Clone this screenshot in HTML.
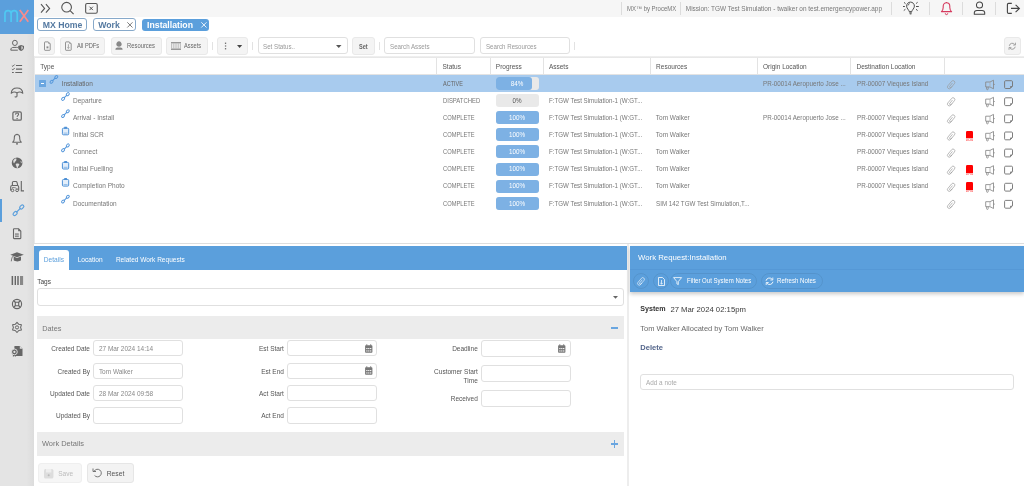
<!DOCTYPE html>
<html><head><meta charset="utf-8"><style>
html,body{margin:0;padding:0;width:1024px;height:486px;overflow:hidden;background:#fff;font-family:"Liberation Sans",sans-serif;}
.r{position:absolute;box-sizing:border-box;}
.t{position:absolute;white-space:nowrap;line-height:12px;height:12px;}
body{will-change:transform}
svg{overflow:visible}
</style></head><body>

<div class="r" style="left:0.00px;top:0.00px;width:34.00px;height:486.00px;background:linear-gradient(to right,#e4e4e4 0,#e4e4e4 78%,#dcdcdc 100%);z-index:2"></div>
<div class="r" style="left:0.00px;top:0.00px;width:34.00px;height:34.00px;background:#5b9fdc;z-index:3"></div>
<svg class="r" style="left:0;top:0;z-index:4" width="34" height="34" viewBox="0 0 34 34"><path d="M4.95 22.1 V13.4 A3.1 3.1 0 0 1 11.1 13.4 V22.1 M11.1 13.4 A3.1 3.1 0 0 1 17.25 13.4 V22.1" stroke="#4fc8f2" stroke-width="1.7" fill="none"/><path d="M19.8 9.9 L28.3 21.8 M28.3 9.9 L19.8 21.8" stroke="#f88b8b" stroke-width="1.7" fill="none"/></svg>
<div class="r" style="left:0.00px;top:199.00px;width:2.30px;height:23.00px;background:#5b9fdc;z-index:4"></div>
<svg class="r" style="left:0;top:0;z-index:4" width="34" height="486" viewBox="0 0 34 486"><ellipse cx="14.9" cy="42.9" rx="2.4" ry="2.6" stroke="#666" stroke-width="1" fill="none"/><path d="M10.8 50.2 c0-2.2 0.9-2.8 3.2-2.8 h2.4 c0.8 0 1.4 0.1 1.8 0.3 M10.8 50.2 h7" stroke="#666" stroke-width="1" fill="none"/><path d="M18.2 45.9 L21.1 44.9 L24 45.9 V47.8 c0 1.6-1.3 2.6-2.9 3.1 c-1.6-0.5-2.9-1.5-2.9-3.1z" fill="#666"/><path d="M21.3 46.1 l1.6 0.55 v1.2 c0 0.9-0.6 1.6-1.6 2z" fill="#cfcfcf"/><path d="M11.9 65.6 l0.9 0.8 l1.9-1.9 M11.9 69.1 l0.9 0.8 l1.9-1.9" stroke="#666" stroke-width="1" fill="none"/><path d="M12 72.5 h1.8 M16 65.5 h6.1 M16 69.1 h6.1 M15.3 72.5 h6.8" stroke="#666" stroke-width="1.2" fill="none"/><path d="M11.2 93.3 C11.4 89.8 14 88 17 88 C20 88 22.6 89.8 22.8 93.3 Q19.9 90.9 17 92.9 Q14.1 90.9 11.2 93.3Z" stroke="#666" stroke-width="1.05" fill="none" stroke-linejoin="round"/><path d="M17 92.9 V96 c0 1.3-1.8 1.4-2 0.3" stroke="#666" stroke-width="1.1" fill="none"/><rect x="12.9" y="111.9" width="8.4" height="8.3" rx="1.3" stroke="#666" stroke-width="1.2" fill="none"/><path d="M15.5 114.6 c0.1-1.3 0.8-1.6 1.6-1.6 c0.9 0 1.5 0.6 1.5 1.3 c0 1-1.4 1.2-1.5 2.6" stroke="#666" stroke-width="1.05" fill="none"/><rect x="16.5" y="118" width="1.2" height="1.1" fill="#666"/><path d="M12.7 142.2 c1-0.8 1.6-1.6 1.6-3.7 V137.5 c0-1.7 1.1-3 2.7-3 s2.7 1.3 2.7 3 v1 c0 2.1 0.6 2.9 1.6 3.7z" stroke="#666" stroke-width="1.05" fill="none" stroke-linejoin="round"/><path d="M16 143.8 h2" stroke="#666" stroke-width="1.2"/><path d="M17 133.8 v0.9" stroke="#666" stroke-width="1"/><circle cx="17.1" cy="162.9" r="5.35" fill="#666"/><path d="M13.2 160.8 c0.5-1.2 1.5-2.2 2.8-2.6 c0.5 0.6 0.6 1.4 0.2 2.2 c-0.4 0.9-1.3 1-1.5 1.9 c-0.2 0.6-0.3 1-0.8 1 c-0.5-0.4-0.6-1.7-0.7-2.5z" fill="#dedede"/><path d="M15.8 163.9 c0.8-0.4 2-0.5 2.9-0.2 c0.6 0.3 0.8 0.8 0.5 1.4 c-0.4 0.8-1 1.2-1.2 2.2 c-0.1 0.5-0.4 0.9-0.9 0.7 c-0.6-0.6-0.5-1.5-0.8-2.2 c-0.2-0.5-0.7-0.9-0.5-1.9z" fill="#dedede"/><path d="M20.8 160.8 c0.6 0.6 1 1.5 0.9 2.4 c-0.5 0-0.9-0.5-1-1.1 c-0.1-0.5-0.1-0.9 0.1-1.3z" fill="#dedede"/><path d="M12.4 185.4 V182.6 c0-0.8 0.4-1.1 1.2-1.1 h2.3 c0.7 0 1 0.4 1.2 1.1 l0.6 2.9" stroke="#666" stroke-width="1.1" fill="none"/><path d="M10.7 190.5 V187 c0-1 0.5-1.5 1.5-1.5 h5 c1 0 1.5 0.5 1.5 1.5 V190.5" stroke="#666" stroke-width="1.1" fill="none"/><circle cx="12.5" cy="190.3" r="1.35" stroke="#666" stroke-width="1" fill="#e4e4e4"/><circle cx="17.1" cy="190.3" r="1.35" stroke="#666" stroke-width="1" fill="#e4e4e4"/><path d="M21.3 181 V190.9 H24" stroke="#666" stroke-width="1.1" fill="none"/><path d="M12 187.8 c1.5-0.6 3-0.3 4.5 0.6" stroke="#666" stroke-width="0.8" fill="none"/><g transform="translate(18.45 210.25) rotate(-45)"><rect x="-7" y="-1.5" width="4.6" height="3" rx="1.5" stroke="#5b9fdc" stroke-width="1.15" fill="none"/><rect x="2.4" y="-1.5" width="4.6" height="3" rx="1.5" stroke="#5b9fdc" stroke-width="1.15" fill="none"/><path d="M-3 0 h6" stroke="#5b9fdc" stroke-width="1.3"/></g><path d="M14.1 228.7 h4.3 l2.4 2.4 v6.9 c0 0.4-0.2 0.6-0.6 0.6 h-6.1 c-0.4 0-0.6-0.2-0.6-0.6 v-8.7 c0-0.4 0.2-0.6 0.6-0.6z" stroke="#666" stroke-width="1.1" fill="none" stroke-linejoin="round"/><path d="M18.2 228.7 l2.6 2.6 h-2.6z" fill="#666"/><path d="M15 233.9 h3.8 M15 235 h3.8 M15 236.6 h3.8" stroke="#666" stroke-width="0.8"/><path d="M10.3 254.8 L17 252.2 L23.8 254.8 L17 257.3z" fill="#666"/><path d="M13.7 256.5 V260.3 c1.5 1.5 5.8 1.5 7.3 0 V256.5 L17 258z" fill="#666"/><path d="M16 254.6 C13 255.6 11.6 257 11.3 261.3" stroke="#666" stroke-width="0.9" fill="none"/><rect x="11.6" y="276" width="1.5" height="9" fill="#666"/><rect x="14.6" y="276" width="1.4" height="9" fill="#666"/><rect x="17" y="276" width="2" height="9" fill="#888"/><rect x="20" y="276" width="3.1" height="9" fill="#888"/><circle cx="17" cy="304" r="4.6" stroke="#666" stroke-width="1.15" fill="none"/><rect x="15.3" y="302.3" width="3.4" height="3.4" rx="0.6" stroke="#666" stroke-width="1.1" fill="none"/><path d="M13.6 300.6 l1.9 1.9 M20.4 300.6 l-1.9 1.9 M13.6 307.4 l1.9-1.9 M20.4 307.4 l-1.9-1.9" stroke="#666" stroke-width="1.3"/><path d="M17.00 322.30 L18.80 324.28 L21.42 324.85 L20.60 327.40 L21.42 329.95 L18.80 330.52 L17.00 332.50 L15.20 330.52 L12.58 329.95 L13.40 327.40 L12.58 324.85 L15.20 324.28z" stroke="#666" stroke-width="1.05" fill="none" stroke-linejoin="round"/><circle cx="17" cy="327.4" r="1.6" stroke="#666" stroke-width="1" fill="none"/><path d="M15 346 h4.8 l2.7 2.7 V355.4 c0 0.4-0.2 0.6-0.6 0.6 h-6.9 c-0.4 0-0.6-0.2-0.6-0.6 V346.6 c0-0.4 0.2-0.6 0.6-0.6z" fill="#666"/><path d="M19.8 346 l2.7 2.7 h-2.7z" fill="#dedede"/><path d="M12.9 353.5 v3.2 l1.5-0.8 l1.5 0.8 v-3.2" fill="#666"/><circle cx="14.4" cy="351.9" r="2.9" fill="#666" stroke="#e4e4e4" stroke-width="0.9"/><circle cx="14.4" cy="351.9" r="1.1" fill="#e4e4e4"/></svg>
<div class="r" style="left:34.00px;top:0.00px;width:990.00px;height:17.00px;background:#f6f6f6"></div>
<div class="r" style="left:621.00px;top:2.00px;width:1.00px;height:13.00px;background:#dcdcdc"></div>
<div class="r" style="left:680.40px;top:2.00px;width:1.00px;height:13.00px;background:#dcdcdc"></div>
<div class="r" style="left:891.20px;top:2.00px;width:1.00px;height:13.00px;background:#dcdcdc"></div>
<div class="r" style="left:929.20px;top:2.00px;width:1.00px;height:13.00px;background:#dcdcdc"></div>
<div class="r" style="left:962.10px;top:2.00px;width:1.00px;height:13.00px;background:#dcdcdc"></div>
<div class="r" style="left:995.40px;top:2.00px;width:1.00px;height:13.00px;background:#dcdcdc"></div>
<div class="t" style="left:626.70px;top:3.00px;font-size:6.7px;color:#777;font-weight:normal;transform:scaleX(0.8955223880597015);transform-origin:left center;">MX&trade; by ProceMX</div>
<div class="t" style="left:685.80px;top:3.00px;font-size:6.45px;color:#777;font-weight:normal;">Mission: TGW Test Simulation - twalker on test.emergencypower.app</div>
<svg class="r" style="left:0;top:0" width="1024" height="17" viewBox="0 0 1024 17"><path d="M41 4.2 L44.6 8.4 L41 12.6 M45.9 4.2 L49.6 8.4 L45.9 12.6" stroke="#555" stroke-width="1.1" fill="none"/><circle cx="66.6" cy="7.2" r="4.85" stroke="#555" stroke-width="1.1" fill="none"/><path d="M70.1 10.6 L73.6 14.1" stroke="#555" stroke-width="1.2"/><rect x="85.65" y="3.55" width="11.6" height="9.7" rx="1.4" stroke="#555" stroke-width="1.1" fill="none"/><path d="M89.5 6.7 L92.9 10.1 M92.9 6.7 L89.5 10.1" stroke="#444" stroke-width="0.9"/><path d="M909.2 11.6 c-0.2-1.6-2.6-3.2-2.6-5.5 c0-2.3 1.8-4 3.9-4 s3.9 1.7 3.9 4 c0 2.3-2.4 3.9-2.6 5.5z" stroke="#444" stroke-width="0.95" fill="none" stroke-linejoin="round"/><path d="M909.3 12.9 h2.5 M909.8 13.9 h1.6" stroke="#444" stroke-width="1"/><path d="M908 5.5 c0.2-1.1 0.9-1.7 1.8-1.9" stroke="#444" stroke-width="0.8" fill="none"/><path d="M903 6.5 h1.9 M916 6.5 h2.8 M904 2.4 l1.5 1.2 M917.6 2.3 l-1.5 1.2 M903.8 10.5 l1.6-1.2 M917.6 10.5 l-1.6-1.2" stroke="#444" stroke-width="0.95"/><path d="M941.4 11.6 c1-0.8 1.8-1.6 1.8-4.1 V6.3 c0-2 1.3-3.5 3.3-3.5 s3.3 1.5 3.3 3.5 v1.2 c0 2.5 0.8 3.3 1.8 4.1z" stroke="#d63a5e" stroke-width="1.1" fill="none" stroke-linejoin="round"/><path d="M945.4 13.2 v0.6 c0 0.6 0.4 0.8 1.1 0.8 s1.1-0.2 1.1-0.8 v-0.6" stroke="#d63a5e" stroke-width="1" fill="none"/><path d="M946.5 2 v0.9" stroke="#d63a5e" stroke-width="1"/><circle cx="979.5" cy="5" r="3.05" stroke="#444" stroke-width="1.05" fill="none"/><path d="M974.3 14.2 v-1.4 c0-1.6 1-2.4 2.6-2.4 h5.2 c1.6 0 2.6 0.8 2.6 2.4 v1.4z" stroke="#444" stroke-width="1.05" fill="none" stroke-linejoin="round"/><path d="M1011.8 3.4 H1008.6 c-0.8 0-1.2 0.4-1.2 1.2 V12.2 c0 0.8 0.4 1.2 1.2 1.2 H1011.8" stroke="#444" stroke-width="1.1" fill="none"/><path d="M1011 8.4 H1019.4 M1015.6 4.8 L1019.4 8.4 L1015.6 12.2" stroke="#444" stroke-width="1.1" fill="none"/></svg>
<div class="r" style="left:37.10px;top:18.20px;width:49.70px;height:13.30px;border:1.2px solid #87a9ca;border-radius:3px"></div>
<div class="t" style="left:42.70px;top:19.00px;font-size:8.7px;color:#5479a0;font-weight:bold;">MX Home</div>
<div class="r" style="left:93.20px;top:18.40px;width:42.50px;height:13.10px;border:1.2px solid #87a9ca;border-radius:3px"></div>
<div class="t" style="left:98.20px;top:19.00px;font-size:8.7px;color:#5479a0;font-weight:bold;">Work</div>
<svg class="r" style="left:126.90px;top:22.00px;" width="6" height="6" viewBox="0 0 6 6"><path d="M0.3 0.3 L5.5 5.5 M5.5 0.3 L0.3 5.5" stroke="#666" stroke-width="0.85"/></svg>
<div class="r" style="left:142.00px;top:18.80px;width:66.70px;height:12.30px;background:#5b9fdc;border-radius:3px"></div>
<div class="t" style="left:147.10px;top:19.00px;font-size:8.7px;color:#fff;font-weight:bold;">Installation</div>
<svg class="r" style="left:200.50px;top:22.00px;" width="6" height="6" viewBox="0 0 6 6"><path d="M0.3 0.3 L5.5 5.5 M5.5 0.3 L0.3 5.5" stroke="#fff" stroke-width="0.85"/></svg>
<div class="r" style="left:38.30px;top:37.00px;width:17.20px;height:18.00px;background:#f4f4f4;border:1px solid #e9e9e9;border-radius:3px"></div>
<svg class="r" style="left:43.50px;top:40.50px;" width="7" height="10" viewBox="0 0 7 10"><path d="M1 0.9 h3.3 l1.9 1.9 v6 c0 0.3-0.2 0.5-0.5 0.5 h-4.7 c-0.3 0-0.5-0.2-0.5-0.5 v-7.4 c0-0.3 0.2-0.5 0.5-0.5z" stroke="#888" stroke-width="0.9" fill="none"/><path d="M4.3 0.9 l1.9 1.9 h-1.9z" fill="#888"/><rect x="2.5" y="5.4" width="1.9" height="1.9" fill="#888"/></svg>
<div class="r" style="left:60.20px;top:37.00px;width:45.30px;height:18.00px;background:#f4f4f4;border:1px solid #e9e9e9;border-radius:3px"></div>
<svg class="r" style="left:64.80px;top:41.00px;" width="7" height="10" viewBox="0 0 7 10"><path d="M1 0.9 h3.3 l1.9 1.9 v6 c0 0.3-0.2 0.5-0.5 0.5 h-4.7 c-0.3 0-0.5-0.2-0.5-0.5 v-7.4 c0-0.3 0.2-0.5 0.5-0.5z" stroke="#888" stroke-width="0.9" fill="none"/><path d="M4.3 0.9 l1.9 1.9 h-1.9z" fill="#888"/><path d="M3.4 3.2 v4.2 M2.4 6.4 l1 1 l1-1" stroke="#888" stroke-width="0.7" fill="none"/></svg>
<div class="t" style="left:76.80px;top:40.00px;font-size:6.7px;color:#666;font-weight:normal;transform:scaleX(0.8507462686567164);transform-origin:left center;">All PDFs</div>
<div class="r" style="left:110.50px;top:37.00px;width:51.00px;height:18.00px;background:#f4f4f4;border:1px solid #e9e9e9;border-radius:3px"></div>
<svg class="r" style="left:114.50px;top:41.00px;" width="8" height="9.5" viewBox="0 0 8 9.5"><path d="M1.3 3.3 c0-1.5 1.2-2.8 2.7-3 c1.5 0.2 2.7 1.5 2.7 3 c0 1.3-1.2 2.5-2.7 2.5 s-2.7-1.2-2.7-2.5z" fill="#888"/><path d="M0.4 8.8 c0-1.6 0.9-2.3 2.2-2.3 h2.8 c1.3 0 2.2 0.7 2.2 2.3z" fill="#888"/><path d="M2.6 5.9 h2.8 v0.7 h-2.8z" fill="#bbb"/></svg>
<div class="t" style="left:126.90px;top:40.00px;font-size:6.7px;color:#666;font-weight:normal;transform:scaleX(0.8731343283582089);transform-origin:left center;">Resources</div>
<div class="r" style="left:166.00px;top:37.00px;width:42.00px;height:18.00px;background:#f4f4f4;border:1px solid #e9e9e9;border-radius:3px"></div>
<svg class="r" style="left:171.00px;top:41.80px;" width="10.2" height="8.2" viewBox="0 0 10.2 8.2"><rect x="0" y="0" width="10" height="1.4" fill="#999"/><rect x="0" y="6.5" width="10" height="1.5" fill="#999"/><path d="M0.5 1.4 v5.1 M2.3 1.4 v5.1 M4.1 1.4 v5.1 M5.9 1.4 v5.1 M7.7 1.4 v5.1 M9.5 1.4 v5.1" stroke="#aaa" stroke-width="0.7"/></svg>
<div class="t" style="left:183.90px;top:40.00px;font-size:6.7px;color:#666;font-weight:normal;transform:scaleX(0.8507462686567164);transform-origin:left center;">Assets</div>
<div class="r" style="left:211.70px;top:42.20px;width:1.00px;height:7.60px;background:#e2e2e2"></div>
<div class="r" style="left:217.00px;top:37.10px;width:30.80px;height:17.60px;background:#f4f4f4;border:1px solid #e9e9e9;border-radius:3px"></div>
<svg class="r" style="left:224.30px;top:40.90px;" width="3" height="10" viewBox="0 0 3 10"><rect x="0.9" y="1.6" width="1.3" height="1.3" fill="#666"/><rect x="0.9" y="4.35" width="1.3" height="1.3" fill="#777"/><rect x="0.9" y="7.1" width="1.3" height="1.3" fill="#666"/></svg>
<svg class="r" style="left:236.80px;top:44.90px;" width="6" height="4" viewBox="0 0 6 4"><path d="M0 0 H5.2 L2.6 2.9z" fill="#444"/></svg>
<div class="r" style="left:251.90px;top:42.20px;width:1.00px;height:7.60px;background:#e2e2e2"></div>
<div class="r" style="left:257.50px;top:37.30px;width:90.20px;height:17.20px;background:#fff;border:1px solid #e0e0e0;border-radius:3px"></div>
<div class="t" style="left:263.30px;top:41.00px;font-size:6.7px;color:#999;font-weight:normal;transform:scaleX(0.9253731343283582);transform-origin:left center;">Set Status..</div>
<svg class="r" style="left:336.00px;top:44.50px;" width="6" height="4" viewBox="0 0 6 4"><path d="M0 0 H5.5 L2.75 3z" fill="#555"/></svg>
<div class="r" style="left:352.30px;top:37.00px;width:22.40px;height:18.00px;background:#f4f4f4;border:1px solid #e9e9e9;border-radius:3px"></div>
<div class="t" style="left:359.40px;top:41.00px;font-size:6.7px;color:#666;font-weight:bold;transform:scaleX(0.835820895522388);transform-origin:left center;">Set</div>
<div class="r" style="left:379.20px;top:42.20px;width:1.00px;height:7.60px;background:#e2e2e2"></div>
<div class="r" style="left:384.30px;top:37.30px;width:90.70px;height:17.20px;background:#fff;border:1px solid #e0e0e0;border-radius:3px"></div>
<div class="t" style="left:390.20px;top:41.00px;font-size:6.7px;color:#999;font-weight:normal;transform:scaleX(0.9253731343283582);transform-origin:left center;">Search Assets</div>
<div class="r" style="left:479.60px;top:37.30px;width:90.20px;height:17.20px;background:#fff;border:1px solid #e0e0e0;border-radius:3px"></div>
<div class="t" style="left:485.50px;top:41.00px;font-size:6.7px;color:#999;font-weight:normal;transform:scaleX(0.9194029850746268);transform-origin:left center;">Search Resources</div>
<div class="r" style="left:573.80px;top:42.20px;width:1.00px;height:7.60px;background:#e2e2e2"></div>
<div class="r" style="left:1003.90px;top:37.20px;width:16.80px;height:17.40px;background:#f4f4f4;border:1px solid #e9e9e9;border-radius:3px"></div>
<svg class="r" style="left:1007.60px;top:41.90px;" width="8.5" height="8.5" viewBox="0 0 8.5 8.5"><g transform="scale(0.85)"><path d="M1.5 4.5 a3.6 3.6 0 0 1 6.5-1.5 M8.5 5.5 a3.6 3.6 0 0 1-6.5 1.5" stroke="#999" stroke-width="1.1" fill="none"/><path d="M8.8 0.8 v2.8 h-2.8 M1.2 9.2 v-2.8 h2.8" stroke="#999" stroke-width="1" fill="none"/></g></svg>
<div class="r" style="left:34.00px;top:56.00px;width:990.00px;height:2.00px;background:linear-gradient(#f2f2f2,#e4e4e4)"></div>
<div class="r" style="left:34.00px;top:56.00px;width:1.00px;height:188.00px;background:#e9e9e9"></div>
<div class="r" style="left:35.00px;top:58.00px;width:989.00px;height:16.50px;background:#fff;border-bottom:1px solid #e3e3e3"></div>
<div class="r" style="left:436.10px;top:57.50px;width:1.00px;height:17.00px;background:#e3e3e3"></div>
<div class="r" style="left:489.80px;top:57.50px;width:1.00px;height:17.00px;background:#e3e3e3"></div>
<div class="r" style="left:542.90px;top:57.50px;width:1.00px;height:17.00px;background:#e3e3e3"></div>
<div class="r" style="left:649.80px;top:57.50px;width:1.00px;height:17.00px;background:#e3e3e3"></div>
<div class="r" style="left:757.20px;top:57.50px;width:1.00px;height:17.00px;background:#e3e3e3"></div>
<div class="r" style="left:849.80px;top:57.50px;width:1.00px;height:17.00px;background:#e3e3e3"></div>
<div class="r" style="left:943.90px;top:57.50px;width:1.00px;height:17.00px;background:#e3e3e3"></div>
<div class="t" style="left:40.20px;top:61.00px;font-size:6.5px;color:#555;font-weight:normal;">Type</div>
<div class="t" style="left:442.50px;top:61.00px;font-size:6.5px;color:#555;font-weight:normal;">Status</div>
<div class="t" style="left:495.80px;top:61.00px;font-size:6.5px;color:#555;font-weight:normal;">Progress</div>
<div class="t" style="left:548.90px;top:61.00px;font-size:6.5px;color:#555;font-weight:normal;">Assets</div>
<div class="t" style="left:656.10px;top:61.00px;font-size:6.5px;color:#555;font-weight:normal;">Resources</div>
<div class="t" style="left:763.00px;top:61.00px;font-size:6.5px;color:#555;font-weight:normal;">Origin Location</div>
<div class="t" style="left:856.50px;top:61.00px;font-size:6.5px;color:#555;font-weight:normal;">Destination Location</div>
<div class="r" style="left:35.00px;top:74.50px;width:989.00px;height:17.20px;background:#a8cbee"></div>
<div class="r" style="left:39.40px;top:80.10px;width:6.50px;height:6.60px;background:#6aa6e0;border-radius:0.5px"></div>
<div class="r" style="left:40.90px;top:83.00px;width:3.50px;height:0.90px;background:#fff"></div>
<div class="t" style="left:61.70px;top:78.00px;font-size:6.5px;color:#666;font-weight:normal;">Installation</div>
<div class="t" style="left:442.50px;top:78.00px;font-size:6.5px;color:#666;font-weight:normal;transform:scaleX(0.85);transform-origin:left center;">ACTIVE</div>
<div class="r" style="left:495.80px;top:77.00px;width:42.80px;height:13.00px;background:#e9e9e9;border-radius:3px;overflow:hidden"></div>
<div class="r" style="left:495.80px;top:77.00px;width:35.95px;height:13.00px;background:#7db1e4;border-radius:3px"></div>
<div class="t" style="left:417.20px;width:200px;text-align:center;top:78.00px;font-size:6.7px;color:#fff;font-weight:normal;transform:scaleX(0.9402985074626865);transform-origin:center center;">84%</div>
<div class="t" style="left:762.80px;top:78.00px;font-size:6.7px;color:#777;font-weight:normal;transform:scaleX(0.9388059701492537);transform-origin:left center;">PR-00014 Aeropuerto Jose ...</div>
<div class="t" style="left:856.60px;top:78.00px;font-size:6.7px;color:#777;font-weight:normal;transform:scaleX(0.9402985074626865);transform-origin:left center;">PR-00007 Vieques Island</div>
<div class="t" style="left:73.00px;top:95.00px;font-size:6.5px;color:#777;font-weight:normal;">Departure</div>
<div class="t" style="left:442.50px;top:95.00px;font-size:6.5px;color:#777;font-weight:normal;transform:scaleX(0.909);transform-origin:left center;">DISPATCHED</div>
<div class="r" style="left:495.80px;top:94.10px;width:42.80px;height:13.00px;background:#e9e9e9;border-radius:3px;overflow:hidden"></div>
<div class="t" style="left:417.20px;width:200px;text-align:center;top:95.00px;font-size:6.7px;color:#555;font-weight:normal;transform:scaleX(0.9402985074626865);transform-origin:center center;">0%</div>
<div class="t" style="left:549.40px;top:95.00px;font-size:6.7px;color:#777;font-weight:normal;transform:scaleX(0.9253731343283582);transform-origin:left center;">F:TGW Test Simulation-1 (W:GT...</div>
<div class="t" style="left:73.00px;top:112.00px;font-size:6.5px;color:#777;font-weight:normal;">Arrival - Install</div>
<div class="t" style="left:442.50px;top:112.00px;font-size:6.5px;color:#777;font-weight:normal;transform:scaleX(0.887);transform-origin:left center;">COMPLETE</div>
<div class="r" style="left:495.80px;top:111.20px;width:42.80px;height:13.00px;background:#e9e9e9;border-radius:3px;overflow:hidden"></div>
<div class="r" style="left:495.80px;top:111.20px;width:42.80px;height:13.00px;background:#7db1e4;border-radius:3px"></div>
<div class="t" style="left:417.20px;width:200px;text-align:center;top:112.00px;font-size:6.7px;color:#fff;font-weight:normal;transform:scaleX(0.9402985074626865);transform-origin:center center;">100%</div>
<div class="t" style="left:549.40px;top:112.00px;font-size:6.7px;color:#777;font-weight:normal;transform:scaleX(0.9253731343283582);transform-origin:left center;">F:TGW Test Simulation-1 (W:GT...</div>
<div class="t" style="left:655.80px;top:112.00px;font-size:6.47px;color:#777;font-weight:normal;">Tom Walker</div>
<div class="t" style="left:762.80px;top:112.00px;font-size:6.7px;color:#777;font-weight:normal;transform:scaleX(0.9388059701492537);transform-origin:left center;">PR-00014 Aeropuerto Jose ...</div>
<div class="t" style="left:856.60px;top:112.00px;font-size:6.7px;color:#777;font-weight:normal;transform:scaleX(0.9402985074626865);transform-origin:left center;">PR-00007 Vieques Island</div>
<div class="t" style="left:73.00px;top:129.00px;font-size:6.5px;color:#777;font-weight:normal;">Initial SCR</div>
<div class="t" style="left:442.50px;top:129.00px;font-size:6.5px;color:#777;font-weight:normal;transform:scaleX(0.887);transform-origin:left center;">COMPLETE</div>
<div class="r" style="left:495.80px;top:128.30px;width:42.80px;height:13.00px;background:#e9e9e9;border-radius:3px;overflow:hidden"></div>
<div class="r" style="left:495.80px;top:128.30px;width:42.80px;height:13.00px;background:#7db1e4;border-radius:3px"></div>
<div class="t" style="left:417.20px;width:200px;text-align:center;top:129.00px;font-size:6.7px;color:#fff;font-weight:normal;transform:scaleX(0.9402985074626865);transform-origin:center center;">100%</div>
<div class="t" style="left:549.40px;top:129.00px;font-size:6.7px;color:#777;font-weight:normal;transform:scaleX(0.9253731343283582);transform-origin:left center;">F:TGW Test Simulation-1 (W:GT...</div>
<div class="t" style="left:655.80px;top:129.00px;font-size:6.47px;color:#777;font-weight:normal;">Tom Walker</div>
<div class="t" style="left:856.60px;top:129.00px;font-size:6.7px;color:#777;font-weight:normal;transform:scaleX(0.9402985074626865);transform-origin:left center;">PR-00007 Vieques Island</div>
<div class="r" style="left:966.30px;top:131.10px;width:6.30px;height:10.00px;background:#f00;border-radius:1.2px"></div>
<div class="r" style="left:966.30px;top:138.30px;width:6.30px;height:2.80px;background:#ffb3b3;border-radius:0 0 1.2px 1.2px"></div>
<div class="r" style="left:968.90px;top:139.30px;width:1.10px;height:0.90px;background:#fff"></div>
<div class="t" style="left:73.00px;top:146.00px;font-size:6.5px;color:#777;font-weight:normal;">Connect</div>
<div class="t" style="left:442.50px;top:146.00px;font-size:6.5px;color:#777;font-weight:normal;transform:scaleX(0.887);transform-origin:left center;">COMPLETE</div>
<div class="r" style="left:495.80px;top:145.40px;width:42.80px;height:13.00px;background:#e9e9e9;border-radius:3px;overflow:hidden"></div>
<div class="r" style="left:495.80px;top:145.40px;width:42.80px;height:13.00px;background:#7db1e4;border-radius:3px"></div>
<div class="t" style="left:417.20px;width:200px;text-align:center;top:146.00px;font-size:6.7px;color:#fff;font-weight:normal;transform:scaleX(0.9402985074626865);transform-origin:center center;">100%</div>
<div class="t" style="left:549.40px;top:146.00px;font-size:6.7px;color:#777;font-weight:normal;transform:scaleX(0.9253731343283582);transform-origin:left center;">F:TGW Test Simulation-1 (W:GT...</div>
<div class="t" style="left:655.80px;top:146.00px;font-size:6.47px;color:#777;font-weight:normal;">Tom Walker</div>
<div class="t" style="left:856.60px;top:146.00px;font-size:6.7px;color:#777;font-weight:normal;transform:scaleX(0.9402985074626865);transform-origin:left center;">PR-00007 Vieques Island</div>
<div class="t" style="left:73.00px;top:163.00px;font-size:6.5px;color:#777;font-weight:normal;">Initial Fuelling</div>
<div class="t" style="left:442.50px;top:163.00px;font-size:6.5px;color:#777;font-weight:normal;transform:scaleX(0.887);transform-origin:left center;">COMPLETE</div>
<div class="r" style="left:495.80px;top:162.50px;width:42.80px;height:13.00px;background:#e9e9e9;border-radius:3px;overflow:hidden"></div>
<div class="r" style="left:495.80px;top:162.50px;width:42.80px;height:13.00px;background:#7db1e4;border-radius:3px"></div>
<div class="t" style="left:417.20px;width:200px;text-align:center;top:163.00px;font-size:6.7px;color:#fff;font-weight:normal;transform:scaleX(0.9402985074626865);transform-origin:center center;">100%</div>
<div class="t" style="left:549.40px;top:163.00px;font-size:6.7px;color:#777;font-weight:normal;transform:scaleX(0.9253731343283582);transform-origin:left center;">F:TGW Test Simulation-1 (W:GT...</div>
<div class="t" style="left:655.80px;top:163.00px;font-size:6.47px;color:#777;font-weight:normal;">Tom Walker</div>
<div class="t" style="left:856.60px;top:163.00px;font-size:6.7px;color:#777;font-weight:normal;transform:scaleX(0.9402985074626865);transform-origin:left center;">PR-00007 Vieques Island</div>
<div class="r" style="left:966.30px;top:165.30px;width:6.30px;height:10.00px;background:#f00;border-radius:1.2px"></div>
<div class="r" style="left:966.30px;top:172.50px;width:6.30px;height:2.80px;background:#ffb3b3;border-radius:0 0 1.2px 1.2px"></div>
<div class="r" style="left:968.90px;top:173.50px;width:1.10px;height:0.90px;background:#fff"></div>
<div class="t" style="left:73.00px;top:180.00px;font-size:6.5px;color:#777;font-weight:normal;">Completion Photo</div>
<div class="t" style="left:442.50px;top:180.00px;font-size:6.5px;color:#777;font-weight:normal;transform:scaleX(0.887);transform-origin:left center;">COMPLETE</div>
<div class="r" style="left:495.80px;top:179.60px;width:42.80px;height:13.00px;background:#e9e9e9;border-radius:3px;overflow:hidden"></div>
<div class="r" style="left:495.80px;top:179.60px;width:42.80px;height:13.00px;background:#7db1e4;border-radius:3px"></div>
<div class="t" style="left:417.20px;width:200px;text-align:center;top:180.00px;font-size:6.7px;color:#fff;font-weight:normal;transform:scaleX(0.9402985074626865);transform-origin:center center;">100%</div>
<div class="t" style="left:549.40px;top:180.00px;font-size:6.7px;color:#777;font-weight:normal;transform:scaleX(0.9253731343283582);transform-origin:left center;">F:TGW Test Simulation-1 (W:GT...</div>
<div class="t" style="left:655.80px;top:180.00px;font-size:6.47px;color:#777;font-weight:normal;">Tom Walker</div>
<div class="t" style="left:856.60px;top:180.00px;font-size:6.7px;color:#777;font-weight:normal;transform:scaleX(0.9402985074626865);transform-origin:left center;">PR-00007 Vieques Island</div>
<div class="r" style="left:966.30px;top:182.40px;width:6.30px;height:10.00px;background:#f00;border-radius:1.2px"></div>
<div class="r" style="left:966.30px;top:189.60px;width:6.30px;height:2.80px;background:#ffb3b3;border-radius:0 0 1.2px 1.2px"></div>
<div class="r" style="left:968.90px;top:190.60px;width:1.10px;height:0.90px;background:#fff"></div>
<div class="t" style="left:73.00px;top:198.00px;font-size:6.5px;color:#777;font-weight:normal;">Documentation</div>
<div class="t" style="left:442.50px;top:198.00px;font-size:6.5px;color:#777;font-weight:normal;transform:scaleX(0.887);transform-origin:left center;">COMPLETE</div>
<div class="r" style="left:495.80px;top:196.70px;width:42.80px;height:13.00px;background:#e9e9e9;border-radius:3px;overflow:hidden"></div>
<div class="r" style="left:495.80px;top:196.70px;width:42.80px;height:13.00px;background:#7db1e4;border-radius:3px"></div>
<div class="t" style="left:417.20px;width:200px;text-align:center;top:198.00px;font-size:6.7px;color:#fff;font-weight:normal;transform:scaleX(0.9402985074626865);transform-origin:center center;">100%</div>
<div class="t" style="left:549.40px;top:198.00px;font-size:6.7px;color:#777;font-weight:normal;transform:scaleX(0.9253731343283582);transform-origin:left center;">F:TGW Test Simulation-1 (W:GT...</div>
<div class="t" style="left:655.80px;top:198.00px;font-size:6.7px;color:#777;font-weight:normal;transform:scaleX(0.9328358208955224);transform-origin:left center;">SIM 142 TGW Test Simulation,T...</div>
<svg class="r" style="left:0;top:0" width="1024" height="243" viewBox="0 0 1024 243"><g transform="translate(53.90 79.40) rotate(-45)"><rect x="-5.0" y="-1.15" width="3.3" height="2.3" rx="1.15" stroke="#5597db" stroke-width="0.95" fill="none"/><rect x="1.7" y="-1.15" width="3.3" height="2.3" rx="1.15" stroke="#5597db" stroke-width="0.95" fill="none"/><path d="M-2.1 0 h4.2" stroke="#5597db" stroke-width="1.1"/></g><g transform="translate(951.15 84.70) rotate(-50) scale(0.78)"><path d="M2.8 -1.2 H-2.6 A1.2 1.2 0 0 0 -2.6 1.2 H3.8 A2.3 2.3 0 0 0 3.8 -3.4 H-3.8 A2.3 2.3 0 0 0 -3.8 1.2 H-1" transform="translate(0 1.1)" stroke="#999" stroke-width="0.8" fill="none"/></g><path d="M985.7 82.00 h4.3 l3.5-1.8 v8.6 l-3.5-1.8 h-4.3z" stroke="#888" stroke-width="0.85" fill="none" stroke-linejoin="round"/><path d="M990 82.00 v4.8" stroke="#aaa" stroke-width="0.8"/><path d="M986.6 86.80 v2.2 c0 0.6 0.4 0.7 0.8 0.7 s0.8-0.1 0.8-0.7 v-2.2" stroke="#888" stroke-width="0.8" fill="none"/><path d="M993.5 84.40 h1.3" stroke="#888" stroke-width="0.8"/><path d="M1005.6 80.70 h5.9 c0.6 0 1 0.4 1 1 v4.5 l-2.3 2.3 h-4.6 c-0.6 0-1-0.4-1-1 v-5.8 c0-0.6 0.4-1 1-1z" stroke="#777" stroke-width="0.95" fill="none" stroke-linejoin="round"/><path d="M1012.5 86.10 l-2.4 2.4 v-1.6 c0-0.5 0.3-0.8 0.8-0.8z" fill="#777"/><g transform="translate(65.45 96.50) rotate(-45)"><rect x="-5.0" y="-1.15" width="3.3" height="2.3" rx="1.15" stroke="#5597db" stroke-width="0.95" fill="none"/><rect x="1.7" y="-1.15" width="3.3" height="2.3" rx="1.15" stroke="#5597db" stroke-width="0.95" fill="none"/><path d="M-2.1 0 h4.2" stroke="#5597db" stroke-width="1.1"/></g><g transform="translate(951.15 101.80) rotate(-50) scale(0.78)"><path d="M2.8 -1.2 H-2.6 A1.2 1.2 0 0 0 -2.6 1.2 H3.8 A2.3 2.3 0 0 0 3.8 -3.4 H-3.8 A2.3 2.3 0 0 0 -3.8 1.2 H-1" transform="translate(0 1.1)" stroke="#999" stroke-width="0.8" fill="none"/></g><path d="M985.7 99.10 h4.3 l3.5-1.8 v8.6 l-3.5-1.8 h-4.3z" stroke="#888" stroke-width="0.85" fill="none" stroke-linejoin="round"/><path d="M990 99.10 v4.8" stroke="#aaa" stroke-width="0.8"/><path d="M986.6 103.90 v2.2 c0 0.6 0.4 0.7 0.8 0.7 s0.8-0.1 0.8-0.7 v-2.2" stroke="#888" stroke-width="0.8" fill="none"/><path d="M993.5 101.50 h1.3" stroke="#888" stroke-width="0.8"/><path d="M1005.6 97.80 h5.9 c0.6 0 1 0.4 1 1 v4.5 l-2.3 2.3 h-4.6 c-0.6 0-1-0.4-1-1 v-5.8 c0-0.6 0.4-1 1-1z" stroke="#777" stroke-width="0.95" fill="none" stroke-linejoin="round"/><path d="M1012.5 103.20 l-2.4 2.4 v-1.6 c0-0.5 0.3-0.8 0.8-0.8z" fill="#777"/><g transform="translate(65.45 113.60) rotate(-45)"><rect x="-5.0" y="-1.15" width="3.3" height="2.3" rx="1.15" stroke="#5597db" stroke-width="0.95" fill="none"/><rect x="1.7" y="-1.15" width="3.3" height="2.3" rx="1.15" stroke="#5597db" stroke-width="0.95" fill="none"/><path d="M-2.1 0 h4.2" stroke="#5597db" stroke-width="1.1"/></g><g transform="translate(951.15 118.90) rotate(-50) scale(0.78)"><path d="M2.8 -1.2 H-2.6 A1.2 1.2 0 0 0 -2.6 1.2 H3.8 A2.3 2.3 0 0 0 3.8 -3.4 H-3.8 A2.3 2.3 0 0 0 -3.8 1.2 H-1" transform="translate(0 1.1)" stroke="#999" stroke-width="0.8" fill="none"/></g><path d="M985.7 116.20 h4.3 l3.5-1.8 v8.6 l-3.5-1.8 h-4.3z" stroke="#888" stroke-width="0.85" fill="none" stroke-linejoin="round"/><path d="M990 116.20 v4.8" stroke="#aaa" stroke-width="0.8"/><path d="M986.6 121.00 v2.2 c0 0.6 0.4 0.7 0.8 0.7 s0.8-0.1 0.8-0.7 v-2.2" stroke="#888" stroke-width="0.8" fill="none"/><path d="M993.5 118.60 h1.3" stroke="#888" stroke-width="0.8"/><path d="M1005.6 114.90 h5.9 c0.6 0 1 0.4 1 1 v4.5 l-2.3 2.3 h-4.6 c-0.6 0-1-0.4-1-1 v-5.8 c0-0.6 0.4-1 1-1z" stroke="#777" stroke-width="0.95" fill="none" stroke-linejoin="round"/><path d="M1012.5 120.30 l-2.4 2.4 v-1.6 c0-0.5 0.3-0.8 0.8-0.8z" fill="#777"/><rect x="62.4" y="128.20" width="6.3" height="6.6" rx="1" stroke="#4d90d6" stroke-width="1" fill="#e3eefa"/><path d="M63.9 128.70 l0.5-1.9 h2.4 l0.5 1.9z" fill="#4d90d6"/><path d="M63.6 133.10 h3.9" stroke="#4d90d6" stroke-width="0.7" opacity="0.8"/><g transform="translate(951.15 136.00) rotate(-50) scale(0.78)"><path d="M2.8 -1.2 H-2.6 A1.2 1.2 0 0 0 -2.6 1.2 H3.8 A2.3 2.3 0 0 0 3.8 -3.4 H-3.8 A2.3 2.3 0 0 0 -3.8 1.2 H-1" transform="translate(0 1.1)" stroke="#999" stroke-width="0.8" fill="none"/></g><path d="M985.7 133.30 h4.3 l3.5-1.8 v8.6 l-3.5-1.8 h-4.3z" stroke="#888" stroke-width="0.85" fill="none" stroke-linejoin="round"/><path d="M990 133.30 v4.8" stroke="#aaa" stroke-width="0.8"/><path d="M986.6 138.10 v2.2 c0 0.6 0.4 0.7 0.8 0.7 s0.8-0.1 0.8-0.7 v-2.2" stroke="#888" stroke-width="0.8" fill="none"/><path d="M993.5 135.70 h1.3" stroke="#888" stroke-width="0.8"/><path d="M1005.6 132.00 h5.9 c0.6 0 1 0.4 1 1 v4.5 l-2.3 2.3 h-4.6 c-0.6 0-1-0.4-1-1 v-5.8 c0-0.6 0.4-1 1-1z" stroke="#777" stroke-width="0.95" fill="none" stroke-linejoin="round"/><path d="M1012.5 137.40 l-2.4 2.4 v-1.6 c0-0.5 0.3-0.8 0.8-0.8z" fill="#777"/><g transform="translate(65.45 147.80) rotate(-45)"><rect x="-5.0" y="-1.15" width="3.3" height="2.3" rx="1.15" stroke="#5597db" stroke-width="0.95" fill="none"/><rect x="1.7" y="-1.15" width="3.3" height="2.3" rx="1.15" stroke="#5597db" stroke-width="0.95" fill="none"/><path d="M-2.1 0 h4.2" stroke="#5597db" stroke-width="1.1"/></g><g transform="translate(951.15 153.10) rotate(-50) scale(0.78)"><path d="M2.8 -1.2 H-2.6 A1.2 1.2 0 0 0 -2.6 1.2 H3.8 A2.3 2.3 0 0 0 3.8 -3.4 H-3.8 A2.3 2.3 0 0 0 -3.8 1.2 H-1" transform="translate(0 1.1)" stroke="#999" stroke-width="0.8" fill="none"/></g><path d="M985.7 150.40 h4.3 l3.5-1.8 v8.6 l-3.5-1.8 h-4.3z" stroke="#888" stroke-width="0.85" fill="none" stroke-linejoin="round"/><path d="M990 150.40 v4.8" stroke="#aaa" stroke-width="0.8"/><path d="M986.6 155.20 v2.2 c0 0.6 0.4 0.7 0.8 0.7 s0.8-0.1 0.8-0.7 v-2.2" stroke="#888" stroke-width="0.8" fill="none"/><path d="M993.5 152.80 h1.3" stroke="#888" stroke-width="0.8"/><path d="M1005.6 149.10 h5.9 c0.6 0 1 0.4 1 1 v4.5 l-2.3 2.3 h-4.6 c-0.6 0-1-0.4-1-1 v-5.8 c0-0.6 0.4-1 1-1z" stroke="#777" stroke-width="0.95" fill="none" stroke-linejoin="round"/><path d="M1012.5 154.50 l-2.4 2.4 v-1.6 c0-0.5 0.3-0.8 0.8-0.8z" fill="#777"/><rect x="62.4" y="162.40" width="6.3" height="6.6" rx="1" stroke="#4d90d6" stroke-width="1" fill="#e3eefa"/><path d="M63.9 162.90 l0.5-1.9 h2.4 l0.5 1.9z" fill="#4d90d6"/><path d="M63.6 167.30 h3.9" stroke="#4d90d6" stroke-width="0.7" opacity="0.8"/><g transform="translate(951.15 170.20) rotate(-50) scale(0.78)"><path d="M2.8 -1.2 H-2.6 A1.2 1.2 0 0 0 -2.6 1.2 H3.8 A2.3 2.3 0 0 0 3.8 -3.4 H-3.8 A2.3 2.3 0 0 0 -3.8 1.2 H-1" transform="translate(0 1.1)" stroke="#999" stroke-width="0.8" fill="none"/></g><path d="M985.7 167.50 h4.3 l3.5-1.8 v8.6 l-3.5-1.8 h-4.3z" stroke="#888" stroke-width="0.85" fill="none" stroke-linejoin="round"/><path d="M990 167.50 v4.8" stroke="#aaa" stroke-width="0.8"/><path d="M986.6 172.30 v2.2 c0 0.6 0.4 0.7 0.8 0.7 s0.8-0.1 0.8-0.7 v-2.2" stroke="#888" stroke-width="0.8" fill="none"/><path d="M993.5 169.90 h1.3" stroke="#888" stroke-width="0.8"/><path d="M1005.6 166.20 h5.9 c0.6 0 1 0.4 1 1 v4.5 l-2.3 2.3 h-4.6 c-0.6 0-1-0.4-1-1 v-5.8 c0-0.6 0.4-1 1-1z" stroke="#777" stroke-width="0.95" fill="none" stroke-linejoin="round"/><path d="M1012.5 171.60 l-2.4 2.4 v-1.6 c0-0.5 0.3-0.8 0.8-0.8z" fill="#777"/><rect x="62.4" y="179.50" width="6.3" height="6.6" rx="1" stroke="#4d90d6" stroke-width="1" fill="#e3eefa"/><path d="M63.9 180.00 l0.5-1.9 h2.4 l0.5 1.9z" fill="#4d90d6"/><path d="M63.6 184.40 h3.9" stroke="#4d90d6" stroke-width="0.7" opacity="0.8"/><g transform="translate(951.15 187.30) rotate(-50) scale(0.78)"><path d="M2.8 -1.2 H-2.6 A1.2 1.2 0 0 0 -2.6 1.2 H3.8 A2.3 2.3 0 0 0 3.8 -3.4 H-3.8 A2.3 2.3 0 0 0 -3.8 1.2 H-1" transform="translate(0 1.1)" stroke="#999" stroke-width="0.8" fill="none"/></g><path d="M985.7 184.60 h4.3 l3.5-1.8 v8.6 l-3.5-1.8 h-4.3z" stroke="#888" stroke-width="0.85" fill="none" stroke-linejoin="round"/><path d="M990 184.60 v4.8" stroke="#aaa" stroke-width="0.8"/><path d="M986.6 189.40 v2.2 c0 0.6 0.4 0.7 0.8 0.7 s0.8-0.1 0.8-0.7 v-2.2" stroke="#888" stroke-width="0.8" fill="none"/><path d="M993.5 187.00 h1.3" stroke="#888" stroke-width="0.8"/><path d="M1005.6 183.30 h5.9 c0.6 0 1 0.4 1 1 v4.5 l-2.3 2.3 h-4.6 c-0.6 0-1-0.4-1-1 v-5.8 c0-0.6 0.4-1 1-1z" stroke="#777" stroke-width="0.95" fill="none" stroke-linejoin="round"/><path d="M1012.5 188.70 l-2.4 2.4 v-1.6 c0-0.5 0.3-0.8 0.8-0.8z" fill="#777"/><g transform="translate(65.45 199.10) rotate(-45)"><rect x="-5.0" y="-1.15" width="3.3" height="2.3" rx="1.15" stroke="#5597db" stroke-width="0.95" fill="none"/><rect x="1.7" y="-1.15" width="3.3" height="2.3" rx="1.15" stroke="#5597db" stroke-width="0.95" fill="none"/><path d="M-2.1 0 h4.2" stroke="#5597db" stroke-width="1.1"/></g><g transform="translate(951.15 204.40) rotate(-50) scale(0.78)"><path d="M2.8 -1.2 H-2.6 A1.2 1.2 0 0 0 -2.6 1.2 H3.8 A2.3 2.3 0 0 0 3.8 -3.4 H-3.8 A2.3 2.3 0 0 0 -3.8 1.2 H-1" transform="translate(0 1.1)" stroke="#999" stroke-width="0.8" fill="none"/></g><path d="M985.7 201.70 h4.3 l3.5-1.8 v8.6 l-3.5-1.8 h-4.3z" stroke="#888" stroke-width="0.85" fill="none" stroke-linejoin="round"/><path d="M990 201.70 v4.8" stroke="#aaa" stroke-width="0.8"/><path d="M986.6 206.50 v2.2 c0 0.6 0.4 0.7 0.8 0.7 s0.8-0.1 0.8-0.7 v-2.2" stroke="#888" stroke-width="0.8" fill="none"/><path d="M993.5 204.10 h1.3" stroke="#888" stroke-width="0.8"/><path d="M1005.6 200.40 h5.9 c0.6 0 1 0.4 1 1 v4.5 l-2.3 2.3 h-4.6 c-0.6 0-1-0.4-1-1 v-5.8 c0-0.6 0.4-1 1-1z" stroke="#777" stroke-width="0.95" fill="none" stroke-linejoin="round"/><path d="M1012.5 205.80 l-2.4 2.4 v-1.6 c0-0.5 0.3-0.8 0.8-0.8z" fill="#777"/></svg>
<div class="r" style="left:34.00px;top:243.00px;width:990.00px;height:1.00px;background:#dedede"></div>
<div class="r" style="left:34.00px;top:246.00px;width:593.00px;height:23.50px;background:#5b9fdc"></div>
<div class="r" style="left:38.60px;top:250.20px;width:30.70px;height:19.40px;background:#fff;border-radius:3px 3px 0 0"></div>
<div class="t" style="left:43.80px;top:254.00px;font-size:6.6px;color:#5b9fdc;font-weight:normal;">Details</div>
<div class="t" style="left:77.70px;top:254.00px;font-size:6.6px;color:#fff;font-weight:normal;">Location</div>
<div class="t" style="left:115.90px;top:254.00px;font-size:6.54px;color:#fff;font-weight:normal;">Related Work Requests</div>
<div class="t" style="left:37.20px;top:276.00px;font-size:6.5px;color:#444;font-weight:normal;">Tags</div>
<div class="r" style="left:37.40px;top:288.30px;width:586.80px;height:17.50px;background:#fff;border:1px solid #e0e0e0;border-radius:3px"></div>
<svg class="r" style="left:612.60px;top:295.60px;" width="5.2" height="3" viewBox="0 0 5.2 3"><path d="M0 0 H5 L2.5 2.8z" fill="#666"/></svg>
<div class="r" style="left:36.90px;top:316.00px;width:587.20px;height:23.00px;background:#ececec"></div>
<div class="t" style="left:42.30px;top:323.00px;font-size:7.3px;color:#777;font-weight:normal;">Dates</div>
<div class="r" style="left:610.60px;top:327.30px;width:7.90px;height:1.60px;background:#6aa6e0"></div>
<div class="r" style="left:93.30px;top:340.00px;width:90.20px;height:16.40px;background:#fff;border:1px solid #e0e0e0;border-radius:3px"></div>
<div class="t" style="left:-110.00px;width:200px;text-align:right;top:343.00px;font-size:6.5px;color:#555;font-weight:normal;">Created Date</div>
<div class="t" style="left:98.90px;top:343.00px;font-size:6.48px;color:#888;font-weight:normal;">27 Mar 2024 14:14</div>
<div class="r" style="left:286.70px;top:340.00px;width:90.70px;height:16.40px;background:#fff;border:1px solid #e0e0e0;border-radius:3px"></div>
<div class="t" style="left:83.90px;width:200px;text-align:right;top:343.00px;font-size:6.5px;color:#555;font-weight:normal;">Est Start</div>
<svg class="r" style="left:364.70px;top:343.70px;" width="7.5" height="9" viewBox="0 0 7.5 9"><path d="M0.8 1.3 h5.9 c0.4 0 0.7 0.3 0.7 0.7 v6.1 c0 0.4-0.3 0.7-0.7 0.7 h-5.9 c-0.4 0-0.7-0.3-0.7-0.7 v-6.1 c0-0.4 0.3-0.7 0.7-0.7z" fill="#777"/><rect x="1.3" y="4" width="1.2" height="1.1" fill="#fff"/><rect x="3.2" y="4" width="1.2" height="1.1" fill="#fff"/><rect x="5.1" y="4" width="1.2" height="1.1" fill="#fff"/><rect x="1.3" y="6.4" width="1.2" height="1.1" fill="#fff"/><rect x="3.2" y="6.4" width="1.2" height="1.1" fill="#fff"/><rect x="5.1" y="6.4" width="1.2" height="1.1" fill="#fff"/><path d="M1.8 0.3 v1.5 M5.7 0.3 v1.5" stroke="#777" stroke-width="1"/></svg>
<div class="r" style="left:93.30px;top:362.50px;width:90.20px;height:16.40px;background:#fff;border:1px solid #e0e0e0;border-radius:3px"></div>
<div class="t" style="left:-110.00px;width:200px;text-align:right;top:366.00px;font-size:6.5px;color:#555;font-weight:normal;">Created By</div>
<div class="t" style="left:98.90px;top:366.00px;font-size:6.48px;color:#888;font-weight:normal;">Tom Walker</div>
<div class="r" style="left:286.70px;top:362.50px;width:90.70px;height:16.40px;background:#fff;border:1px solid #e0e0e0;border-radius:3px"></div>
<div class="t" style="left:83.90px;width:200px;text-align:right;top:366.00px;font-size:6.5px;color:#555;font-weight:normal;">Est End</div>
<svg class="r" style="left:364.70px;top:366.20px;" width="7.5" height="9" viewBox="0 0 7.5 9"><path d="M0.8 1.3 h5.9 c0.4 0 0.7 0.3 0.7 0.7 v6.1 c0 0.4-0.3 0.7-0.7 0.7 h-5.9 c-0.4 0-0.7-0.3-0.7-0.7 v-6.1 c0-0.4 0.3-0.7 0.7-0.7z" fill="#777"/><rect x="1.3" y="4" width="1.2" height="1.1" fill="#fff"/><rect x="3.2" y="4" width="1.2" height="1.1" fill="#fff"/><rect x="5.1" y="4" width="1.2" height="1.1" fill="#fff"/><rect x="1.3" y="6.4" width="1.2" height="1.1" fill="#fff"/><rect x="3.2" y="6.4" width="1.2" height="1.1" fill="#fff"/><rect x="5.1" y="6.4" width="1.2" height="1.1" fill="#fff"/><path d="M1.8 0.3 v1.5 M5.7 0.3 v1.5" stroke="#777" stroke-width="1"/></svg>
<div class="r" style="left:93.30px;top:384.50px;width:90.20px;height:16.40px;background:#fff;border:1px solid #e0e0e0;border-radius:3px"></div>
<div class="t" style="left:-110.00px;width:200px;text-align:right;top:388.00px;font-size:6.5px;color:#555;font-weight:normal;">Updated Date</div>
<div class="t" style="left:98.90px;top:388.00px;font-size:6.48px;color:#888;font-weight:normal;">28 Mar 2024 09:58</div>
<div class="r" style="left:286.70px;top:384.50px;width:90.70px;height:16.40px;background:#fff;border:1px solid #e0e0e0;border-radius:3px"></div>
<div class="t" style="left:83.90px;width:200px;text-align:right;top:388.00px;font-size:6.5px;color:#555;font-weight:normal;">Act Start</div>
<div class="r" style="left:93.30px;top:407.30px;width:90.20px;height:16.40px;background:#fff;border:1px solid #e0e0e0;border-radius:3px"></div>
<div class="t" style="left:-110.00px;width:200px;text-align:right;top:410.00px;font-size:6.5px;color:#555;font-weight:normal;">Updated By</div>
<div class="r" style="left:286.70px;top:407.30px;width:90.70px;height:16.40px;background:#fff;border:1px solid #e0e0e0;border-radius:3px"></div>
<div class="t" style="left:83.90px;width:200px;text-align:right;top:410.00px;font-size:6.5px;color:#555;font-weight:normal;">Act End</div>
<div class="r" style="left:480.60px;top:339.90px;width:90.50px;height:16.70px;background:#fff;border:1px solid #e0e0e0;border-radius:3px"></div>
<div class="r" style="left:480.60px;top:364.90px;width:90.50px;height:16.70px;background:#fff;border:1px solid #e0e0e0;border-radius:3px"></div>
<div class="r" style="left:480.60px;top:390.40px;width:90.50px;height:16.20px;background:#fff;border:1px solid #e0e0e0;border-radius:3px"></div>
<div class="t" style="left:277.80px;width:200px;text-align:right;top:343.00px;font-size:6.5px;color:#555;font-weight:normal;">Deadline</div>
<svg class="r" style="left:558.30px;top:343.60px;" width="7.5" height="9" viewBox="0 0 7.5 9"><path d="M0.8 1.3 h5.9 c0.4 0 0.7 0.3 0.7 0.7 v6.1 c0 0.4-0.3 0.7-0.7 0.7 h-5.9 c-0.4 0-0.7-0.3-0.7-0.7 v-6.1 c0-0.4 0.3-0.7 0.7-0.7z" fill="#777"/><rect x="1.3" y="4" width="1.2" height="1.1" fill="#fff"/><rect x="3.2" y="4" width="1.2" height="1.1" fill="#fff"/><rect x="5.1" y="4" width="1.2" height="1.1" fill="#fff"/><rect x="1.3" y="6.4" width="1.2" height="1.1" fill="#fff"/><rect x="3.2" y="6.4" width="1.2" height="1.1" fill="#fff"/><rect x="5.1" y="6.4" width="1.2" height="1.1" fill="#fff"/><path d="M1.8 0.3 v1.5 M5.7 0.3 v1.5" stroke="#777" stroke-width="1"/></svg>
<div class="t" style="left:277.80px;width:200px;text-align:right;top:366.00px;font-size:6.5px;color:#555;font-weight:normal;">Customer Start</div>
<div class="t" style="left:277.80px;width:200px;text-align:right;top:375.00px;font-size:6.5px;color:#555;font-weight:normal;">Time</div>
<div class="t" style="left:277.80px;width:200px;text-align:right;top:393.00px;font-size:6.5px;color:#555;font-weight:normal;">Received</div>
<div class="r" style="left:36.80px;top:431.90px;width:587.20px;height:24.10px;background:#ececec"></div>
<div class="t" style="left:41.90px;top:438.00px;font-size:7.45px;color:#777;font-weight:normal;">Work Details</div>
<div class="r" style="left:610.60px;top:443.00px;width:7.90px;height:1.60px;background:#6aa6e0"></div>
<div class="r" style="left:613.75px;top:439.80px;width:1.60px;height:8.00px;background:#6aa6e0"></div>
<div class="r" style="left:38.40px;top:463.10px;width:43.40px;height:20.00px;background:#f6f6f6;border:1px solid #efefef;border-radius:3px"></div>
<svg class="r" style="left:43.60px;top:468.50px;" width="9.5" height="9.5" viewBox="0 0 9.5 9.5"><rect x="0" y="0" width="9.4" height="9.4" rx="1.5" fill="#ddd"/><rect x="2" y="0" width="5.4" height="3.5" fill="#eee"/><circle cx="4.7" cy="6.2" r="1" fill="#bbb"/></svg>
<div class="t" style="left:58.20px;top:468.00px;font-size:6.54px;color:#bbb;font-weight:normal;">Save</div>
<div class="r" style="left:87.00px;top:463.10px;width:46.80px;height:20.00px;background:#f3f3f3;border:1px solid #e6e6e6;border-radius:3px"></div>
<svg class="r" style="left:91.50px;top:468.00px;" width="10" height="10" viewBox="0 0 10 10"><path d="M2.3 3 a3.8 3.8 0 1 1 0.3 4.5" stroke="#666" stroke-width="0.9" fill="none"/><path d="M1 0.5 v3 h3" stroke="#666" stroke-width="0.9" fill="none"/></svg>
<div class="t" style="left:106.70px;top:468.00px;font-size:6.74px;color:#555;font-weight:normal;">Reset</div>
<div class="r" style="left:627.40px;top:244.00px;width:2.00px;height:242.00px;background:#ededed"></div>
<div class="r" style="left:629.60px;top:246.10px;width:394.40px;height:46.20px;background:#5b9fdc;box-shadow:0 2px 4px rgba(0,0,0,0.22)"></div>
<div class="r" style="left:629.60px;top:268.90px;width:394.40px;height:1.00px;background:#5598d6"></div>
<div class="t" style="left:638.00px;top:252.00px;font-size:7.8px;color:#fff;font-weight:normal;">Work Request:Installation</div>
<div class="r" style="left:633.30px;top:273.00px;width:16.10px;height:16.10px;border:1px solid rgba(0,0,0,0.07);border-radius:50%"></div>
<svg class="r" style="left:0;top:0" width="1024" height="486" viewBox="0 0 1024 486"><g transform="translate(641 281.4) rotate(-50) scale(0.72)"><path d="M2.8 -1.2 H-2.6 A1.2 1.2 0 0 0 -2.6 1.2 H3.8 A2.3 2.3 0 0 0 3.8 -3.4 H-3.8 A2.3 2.3 0 0 0 -3.8 1.2 H-1" transform="translate(0 1.1)" stroke="#fff" stroke-width="0.85" fill="none" opacity="0.9"/></g></svg>
<div class="r" style="left:652.70px;top:273.00px;width:16.10px;height:16.10px;border:1px solid rgba(0,0,0,0.07);border-radius:50%"></div>
<svg class="r" style="left:657.50px;top:276.50px;" width="7" height="9" viewBox="0 0 7 9"><path d="M0.5 0.5 h4 l2 2 v6 h-6z" stroke="#fff" stroke-width="0.8" fill="none"/><path d="M3.5 3 v4 M2.3 6 l1.2 1.2 l1.2-1.2" stroke="#fff" stroke-width="0.7" fill="none"/></svg>
<div class="r" style="left:669.70px;top:272.90px;width:87.50px;height:15.80px;border:1px solid rgba(0,0,0,0.07);border-radius:8px"></div>
<svg class="r" style="left:673.30px;top:277.00px;" width="9.5" height="8.5" viewBox="0 0 9.5 8.5"><path d="M0.6 0.6 H8.6 L5.3 4.6 V7.6 L3.9 6.8 V4.6z" stroke="#fff" stroke-width="0.8" fill="none" stroke-linejoin="round"/></svg>
<div class="t" style="left:686.70px;top:275.00px;font-size:6.7px;color:#fff;font-weight:normal;transform:scaleX(0.9044776119402984);transform-origin:left center;">Filter Out System Notes</div>
<div class="r" style="left:761.00px;top:272.90px;width:61.60px;height:15.80px;border:1px solid rgba(0,0,0,0.07);border-radius:8px"></div>
<svg class="r" style="left:765.00px;top:277.00px;" width="9" height="8.5" viewBox="0 0 9 8.5"><path d="M1 3.8 a3.5 3.5 0 0 1 6.3-1.3 M8 4.7 a3.5 3.5 0 0 1-6.3 1.3" stroke="#fff" stroke-width="0.9" fill="none"/><path d="M7.8 0.5 v2.5 h-2.5 M1.2 8 v-2.5 h2.5" stroke="#fff" stroke-width="0.8" fill="none"/></svg>
<div class="t" style="left:777.40px;top:275.00px;font-size:6.7px;color:#fff;font-weight:normal;transform:scaleX(0.9104477611940298);transform-origin:left center;">Refresh Notes</div>
<div class="t" style="left:640.30px;top:303.00px;font-size:7.14px;color:#333;font-weight:bold;">System</div>
<div class="t" style="left:670.40px;top:304.00px;font-size:7.73px;color:#3a3a3a;font-weight:normal;">27 Mar 2024 02:15pm</div>
<div class="t" style="left:640.30px;top:323.00px;font-size:7.52px;color:#6a6a6a;font-weight:normal;">Tom Walker Allocated by Tom Walker</div>
<div class="t" style="left:640.30px;top:342.00px;font-size:7.53px;color:#52648a;font-weight:bold;">Delete</div>
<div class="r" style="left:640.30px;top:374.20px;width:374.20px;height:16.30px;background:#fff;border:1px solid #e0e0e0;border-radius:3px"></div>
<div class="t" style="left:646.10px;top:377.00px;font-size:6.7px;color:#aaa;font-weight:normal;transform:scaleX(0.953731343283582);transform-origin:left center;">Add a note</div>
</body></html>
